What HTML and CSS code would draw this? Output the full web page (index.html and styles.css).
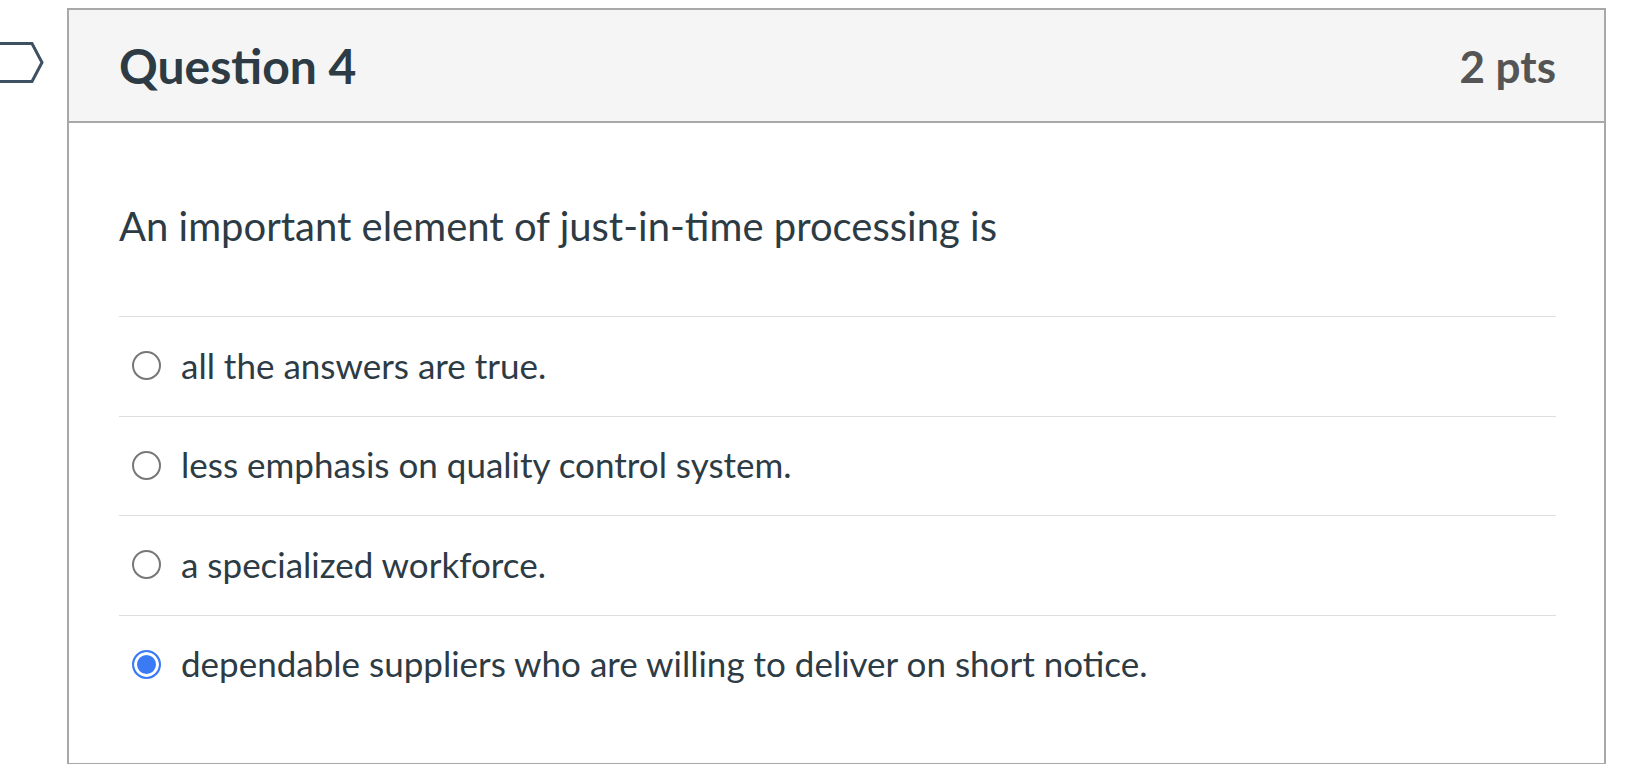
FILE: index.html
```html
<!DOCTYPE html>
<html lang="en">
<head>
<meta charset="utf-8">
<title>Question 4</title>
<link rel="stylesheet" href="styles.css">
</head>
<body>
<div class="page">
  <div class="marker">
    <svg class="marker-icon" width="46" height="44" viewBox="0 0 46 44" aria-hidden="true">
      <path d="M-4 2.5 H32 L42 21.5 L32 40.5 H-4" fill="#ffffff" stroke="#3e5163" stroke-width="3" stroke-linejoin="miter"/>
    </svg>
  </div>
  <div class="card">
    <div class="card-header">
      <h2 class="q-title">Question 4</h2>
      <div class="q-points">2 pts</div>
    </div>
    <div class="card-body">
      <p class="q-text">An important element of just-in-time processing is</p>
      <div class="answers">
        <label class="answer"><span class="radio"></span><span class="answer-text">all the answers are true.</span></label>
        <label class="answer"><span class="radio"></span><span class="answer-text">less emphasis on quality control system.</span></label>
        <label class="answer"><span class="radio"></span><span class="answer-text">a specialized workforce.</span></label>
        <label class="answer"><span class="radio checked"></span><span class="answer-text">dependable suppliers who are willing to deliver on short notice.</span></label>
      </div>
    </div>
  </div>
</div>
</body>
</html>
```
FILE: styles.css
```css
html, body {
  margin: 0;
  padding: 0;
  background: #ffffff;
}

body {
  font-family: Lato, "Liberation Sans", sans-serif;
  color: #2d3b45;
}

.page {
  display: flex;
  align-items: flex-start;
  padding-top: 8px;
  height: 764px;
  box-sizing: border-box;
}

.marker {
  width: 67px;
  flex: none;
  padding-top: 33px;
}

.marker-icon {
  display: block;
}

.card {
  width: 1539px;
  height: 757px;
  box-sizing: border-box;
  border: 2px solid #a8a8a8;
  display: flex;
  flex-direction: column;
}

.card-header {
  height: 113px;
  box-sizing: border-box;
  background: #f5f5f5;
  border-bottom: 2px solid #a8a8a8;
  display: flex;
  align-items: center;
  justify-content: space-between;
  padding: 0 48px 0 50px;
}

.q-title {
  margin: 0;
  font-size: 48px;
  font-weight: 700;
  color: #2d3b45;
  line-height: 1;
}

.q-points {
  font-size: 44px;
  font-weight: 700;
  color: #555555;
  line-height: 1;
}

.card-body {
  padding: 0 48px 0 50px;
}

.q-text {
  margin: 83px 0 0;
  height: 110px;
  font-size: 40px;
  line-height: 40px;
}

.answers {
  display: flex;
  flex-direction: column;
}

.answer {
  display: flex;
  align-items: center;
  height: 99.5px;
  box-sizing: border-box;
  border-top: 1px solid #dddddd;
  padding-left: 13px;
  padding-bottom: 3px;
  gap: 20px;
}

.radio {
  width: 29px;
  height: 29px;
  box-sizing: border-box;
  border: 2px solid #777777;
  border-radius: 50%;
  flex: none;
  background: #ffffff;
  margin-top: 2px;
}

.radio.checked {
  border: 2px solid #3a7af5;
  background: #3a7af5;
  box-shadow: inset 0 0 0 3px #ffffff;
}

.answer-text {
  font-size: 35px;
  line-height: 40px;
  color: #2d3b45;
}
```
